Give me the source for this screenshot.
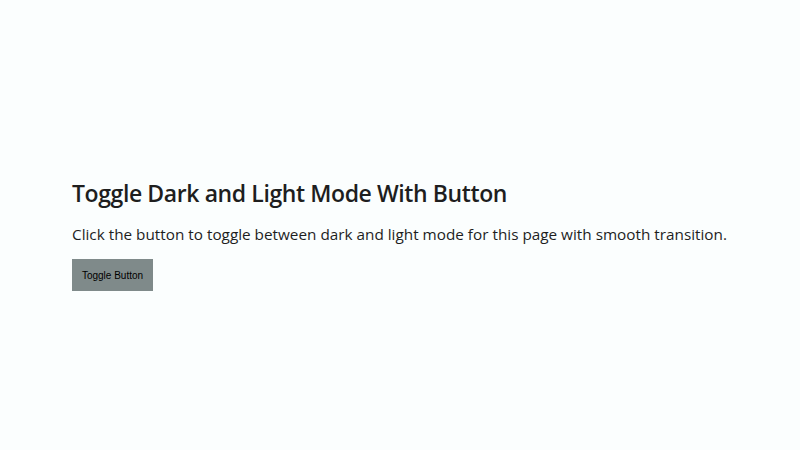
export default function App() {
  return (
    <div className="w-[800px] h-[450px] bg-[#fbfefe] text-[#1e1e1e] pl-[72px] pt-[176px]" style={{ fontFamily: '"Open Sans", sans-serif' }}>
      <h1 className="text-[23px] leading-[34px] font-semibold tracking-[-0.4px]">Toggle Dark and Light Mode With Button</h1>
      <p className="mt-[13px] text-[15.3px] leading-[22px]">Click the button to toggle between dark and light mode for this page with smooth transition.</p>
      <button className="mt-[14px] w-[81px] h-[32px] bg-[#7f8a8a] text-black text-[10px]" style={{ fontFamily: '"Liberation Sans", sans-serif' }}>Toggle Button</button>
    </div>
  );
}
